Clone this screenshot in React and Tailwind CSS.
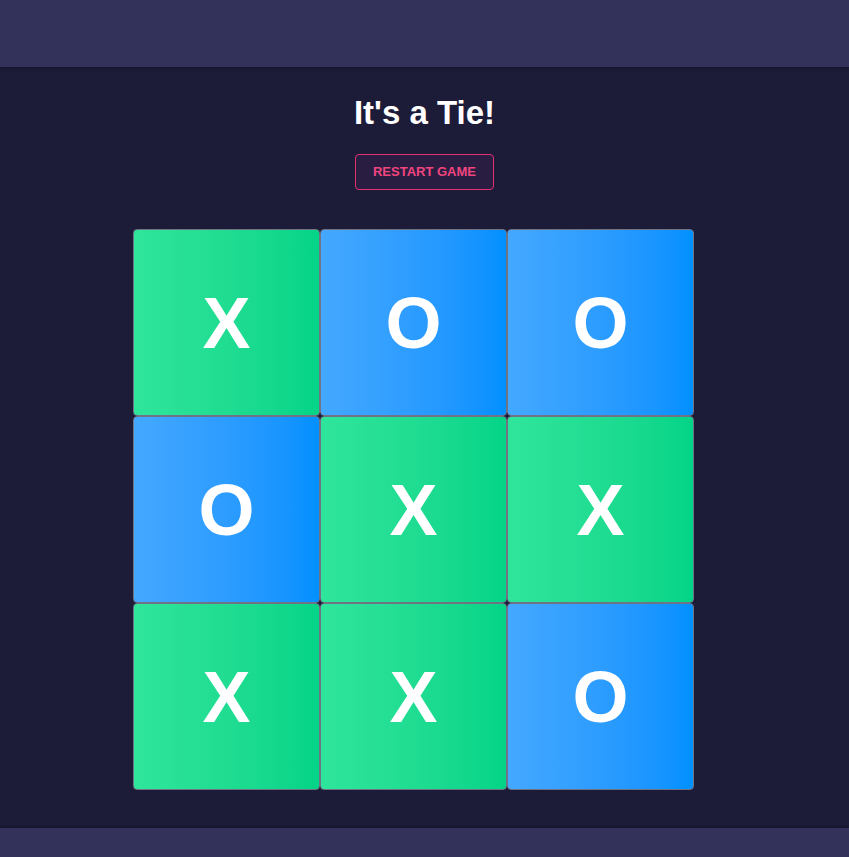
import React from "react";

const board = ["X", "O", "O", "O", "X", "X", "X", "X", "O"];

function Cell({ value }) {
  const isX = value === "X";
  return (
    <div
      className={
        "flex h-[187px] w-[187px] items-center justify-center rounded-[4px] border border-[#6f7384] " +
        (isX
          ? "bg-gradient-to-r from-[#2fe59c] to-[#03d487]"
          : "bg-gradient-to-r from-[#44a8ff] to-[#0090ff]")
      }
    >
      <span className="text-[72px] font-bold leading-none text-white">{value}</span>
    </div>
  );
}

export default function App() {
  return (
    <div className="flex min-h-[857px] flex-col bg-[#1c1b38] font-['Liberation_Sans',Arial,sans-serif]">
      <header className="h-[67px] bg-[#33325a] shadow-[0_2px_3px_rgba(0,0,0,0.18)]" />
      <main className="flex flex-col pt-[27px] pb-[38px]">
        <h1 className="text-center text-[33px] font-bold leading-[38px] text-white">It's a Tie!</h1>
        <div className="mt-[22px] flex justify-center">
          <button className="h-[36px] rounded-[4px] border border-[#e0336e] bg-[#2a1d42] px-[17px] text-[13px] font-bold text-[#f0457e]">
            RESTART GAME
          </button>
        </div>
        <div className="mt-[39px] ml-[133px] grid w-[561px] grid-cols-3">
          {board.map((v, i) => (
            <Cell key={i} value={v} />
          ))}
        </div>
      </main>
      <footer className="h-[30px] bg-[#33325a] shadow-[0_-1px_2px_rgba(0,0,0,0.3)]" />
    </div>
  );
}
